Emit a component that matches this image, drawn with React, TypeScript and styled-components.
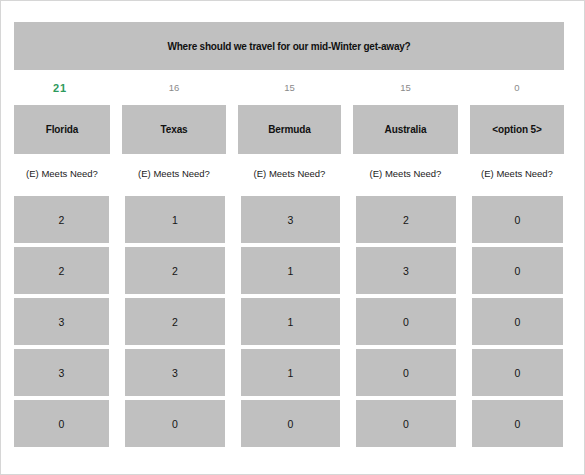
import React from 'react';
import styled, { createGlobalStyle } from 'styled-components';

const GlobalStyle = createGlobalStyle`
  html, body {
    margin: 0;
    padding: 0;
    background: #ffffff;
  }
`;

const Frame = styled.div`
  box-sizing: border-box;
  width: 585px;
  height: 475px;
  border: 1px solid #d6d6d6;
  padding: 21px 20px 0 13px;
  font-family: 'Liberation Sans', Arial, sans-serif;
  color: #1a1a1a;
  background: #ffffff;
`;

const Title = styled.div`
  height: 48px;
  background: #c0c0c0;
  display: flex;
  align-items: center;
  justify-content: center;
  font-size: 10px;
  font-weight: bold;
  letter-spacing: -0.2px;
  color: #111;
`;

const HeadGrid = styled.div`
  display: grid;
  grid-template-columns: 96px 104px 103px 105px 94px;
  column-gap: 12px;
`;

const Score = styled.div<{ $winner?: boolean }>`
  height: 35px;
  display: flex;
  align-items: center;
  justify-content: center;
  font-size: ${p => (p.$winner ? '11px' : '9.5px')};
  font-weight: ${p => (p.$winner ? 'bold' : 'normal')};
  letter-spacing: ${p => (p.$winner ? '1px' : '0')};
  color: ${p => (p.$winner ? '#2e9a5c' : '#8a8a8a')};
  padding-right: ${p => (p.$winner ? '4px' : '0')};
`;

const Option = styled.div`
  height: 49px;
  background: #c0c0c0;
  display: flex;
  align-items: center;
  justify-content: center;
  font-size: 10px;
  font-weight: bold;
  letter-spacing: -0.1px;
  color: #111;
`;

const Criterion = styled.div`
  height: 42px;
  display: flex;
  align-items: center;
  justify-content: center;
  padding-bottom: 4px;
  box-sizing: border-box;
  font-size: 9.5px;
  color: #1a1a1a;
`;

const DataGrid = styled.div`
  display: grid;
  grid-template-columns: 95px 100px 99px 100px 91px;
  grid-auto-rows: 47px;
  column-gap: 16px;
  row-gap: 4px;
`;

const Cell = styled.div`
  background: #c0c0c0;
  display: flex;
  align-items: center;
  justify-content: center;
  font-size: 10.5px;
  color: #151515;
`;

const options = [
  { name: 'Florida', score: 21, values: [2, 2, 3, 3, 0] },
  { name: 'Texas', score: 16, values: [1, 2, 2, 3, 0] },
  { name: 'Bermuda', score: 15, values: [3, 1, 1, 1, 0] },
  { name: 'Australia', score: 15, values: [2, 3, 0, 0, 0] },
  { name: '<option 5>', score: 0, values: [0, 0, 0, 0, 0] },
];

export default function App() {
  const best = Math.max(...options.map(o => o.score));
  const rows = [0, 1, 2, 3, 4];

  return (
    <>
      <GlobalStyle />
      <Frame>
        <Title>Where should we travel for our mid-Winter get-away?</Title>
        <HeadGrid>
          {options.map(o => (
            <Score key={'s' + o.name} $winner={o.score === best}>{o.score}</Score>
          ))}
          {options.map(o => (
            <Option key={'o' + o.name}>{o.name}</Option>
          ))}
          {options.map(o => (
            <Criterion key={'c' + o.name}>(E) Meets Need?</Criterion>
          ))}
        </HeadGrid>
        <DataGrid>
          {rows.map(r =>
            options.map(o => <Cell key={o.name + r}>{o.values[r]}</Cell>)
          )}
        </DataGrid>
      </Frame>
    </>
  );
}
